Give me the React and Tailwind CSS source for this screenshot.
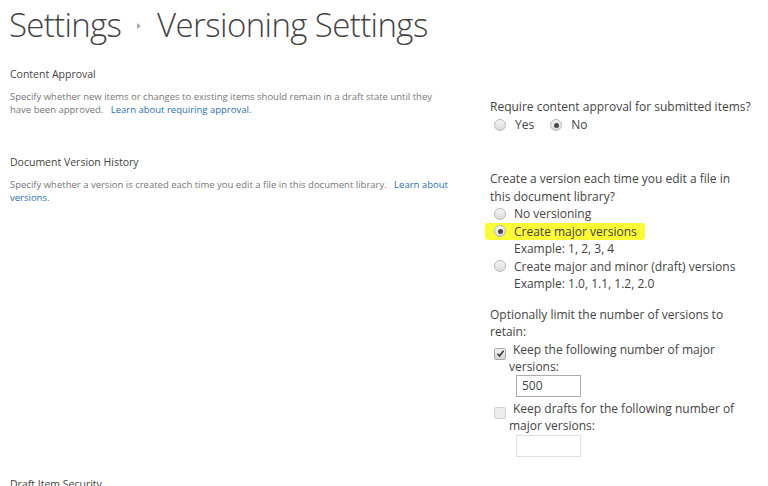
const Radio = ({ checked }) => (
  <span className="inline-flex shrink-0 w-[12px] h-[12px] rounded-full border border-[#b9b9b9] bg-linear-to-b from-[#f7f7f7] to-[#dadada] items-center justify-center">
    {checked && <span className="w-[5px] h-[5px] rounded-full bg-[#4a4a4a]" />}
  </span>
);

const Check = ({ checked, disabled }) => (
  <span
    className={
      "flex shrink-0 w-[12px] h-[12px] rounded-[2px] border items-center justify-center " +
      (disabled
        ? "border-[#d4d4d4] bg-[#ececec]"
        : "border-[#a9a9a9] bg-linear-to-b from-[#f2f2f2] to-[#d6d6d6]")
    }
  >
    {checked && (
      <svg width="9" height="9" viewBox="0 0 9 9">
        <path d="M1.5 4.8 L3.6 7 L7.6 1.8" fill="none" stroke="#3a3a3a" strokeWidth="1.6" />
      </svg>
    )}
  </span>
);

export default function App() {
  return (
    <div className="w-[768px] h-[486px] overflow-hidden bg-white text-[#444] font-['Open_Sans',sans-serif]">
      {/* Title */}
      <div className="flex items-center h-[48px] pl-[9px] text-[#444]">
        <span className="text-[33px] font-light leading-none tracking-[-0.7px]">Settings</span>
        <span className="mx-[16px] w-0 h-0 border-y-[3.5px] border-y-transparent border-l-[4px] border-l-[#a8a8a8] mt-[3px]" />
        <span className="text-[33px] font-light leading-none tracking-[-0.6px]">Versioning Settings</span>
      </div>

      {/* Content Approval */}
      <div className="flex mt-[20px]">
        <div className="w-[490px] pl-[10px] pr-[20px]">
          <div className="text-[10.5px] leading-[13px] text-[#444]">Content Approval</div>
          <div className="mt-[9px] text-[9.5px] leading-[13px] text-[#777] whitespace-nowrap">
            Specify whether new items or changes to existing items should remain in a draft state until they
            <br />
            have been approved.&nbsp;&nbsp; <span className="text-[#2b6fb6]">Learn about requiring approval.</span>
          </div>
        </div>
        <div className="flex-1 pt-[30px] text-[12px] leading-[18px]">
          <div>Require content approval for submitted items?</div>
          <div className="flex items-center h-[18px] pl-[4px]">
            <Radio />
            <span className="ml-[9px]">Yes</span>
            <span className="ml-[16px] flex"><Radio checked /></span>
            <span className="ml-[9px]">No</span>
          </div>
        </div>
      </div>

      {/* Document Version History */}
      <div className="flex mt-[22px]">
        <div className="w-[490px] pl-[10px] pr-[20px]">
          <div className="text-[10.5px] leading-[13px] text-[#444]">Document Version History</div>
          <div className="mt-[9px] text-[9.5px] leading-[13px] text-[#777] whitespace-nowrap">
            Specify whether a version is created each time you edit a file in this document library.&nbsp;&nbsp;{" "}
            <span className="text-[#2b6fb6]">Learn about</span>
            <br />
            <span className="text-[#2b6fb6]">versions.</span>
          </div>
        </div>
        <div className="flex-1 pt-[14px] text-[12px] leading-[17.5px]">
          <div>
            Create a version each time you edit a file in
            <br />
            this document library?
          </div>
          <div className="flex items-center gap-[8px] pl-[4px] h-[17.5px]">
            <Radio />
            <span>No versioning</span>
          </div>
          <div className="flex items-center gap-[8px] -ml-[5px] pl-[9px] w-[160px] h-[17.5px] bg-[#fbfb35] rounded-[3px]">
            <Radio checked />
            <span>Create major versions</span>
          </div>
          <div className="pl-[24px]">Example: 1, 2, 3, 4</div>
          <div className="flex items-center gap-[8px] pl-[4px] h-[17.5px]">
            <Radio />
            <span>Create major and minor (draft) versions</span>
          </div>
          <div className="pl-[24px]">Example: 1.0, 1.1, 1.2, 2.0</div>

          <div className="mt-[13px]">
            Optionally limit the number of versions to
            <br />
            retain:
          </div>
          <div className="flex items-start h-[17px] pl-[4px]">
            <span className="mt-[7px]"><Check checked /></span>
            <span className="ml-[7px]">Keep the following number of major</span>
          </div>
          <div className="pl-[19px] h-[17px]">versions:</div>
          <div className="ml-[26px] w-[65px] h-[22px] border border-[#ababab] pl-[5px] leading-[20px]">500</div>
          <div className="flex items-start h-[17px] mt-[3px] pl-[4px]">
            <span className="mt-[7px]"><Check disabled /></span>
            <span className="ml-[7px]">Keep drafts for the following number of</span>
          </div>
          <div className="pl-[19px] h-[17px]">major versions:</div>
          <div className="ml-[26px] mt-[1px] w-[65px] h-[22px] border border-[#e1e1e1]" />
        </div>
      </div>

      <div className="pl-[10px] mt-[21px] text-[10.5px] leading-[13px] text-[#444]">Draft Item Security</div>
    </div>
  );
}
